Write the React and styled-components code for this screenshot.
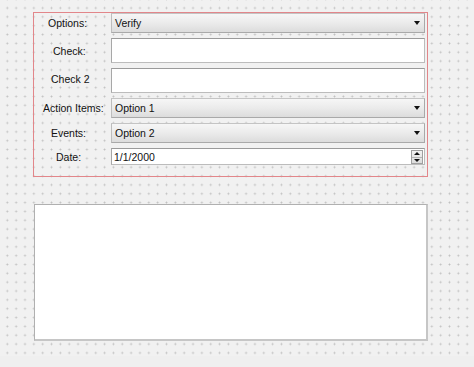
import React from "react";
import styled, { createGlobalStyle } from "styled-components";

const Global = createGlobalStyle`
  html, body { margin: 0; padding: 0; background: #efefef; }
  body { font-family: "Liberation Sans", Arial, sans-serif; }
`;

const Page = styled.div`
  width: 474px;
  height: 367px;
  overflow: hidden;
  background: #efefef;
`;

const Canvas = styled.div`
  height: 356px;
  box-sizing: border-box;
  padding: 12px 0 0 33px;
  background-color: #f1f1f1;
  background-image: radial-gradient(circle, #bfbfbf 0.8px, rgba(0,0,0,0) 1.15px);
  background-size: 8.85px 8.85px;
  background-position: 2.9px 3.6px;
`;

const Frame = styled.div`
  width: 395px;
  height: 165px;
  box-sizing: border-box;
  border: 1px solid #e2868a;
  padding: 0 2px 0 0;
  display: grid;
  grid-template-columns: 77px 1fr;
  row-gap: 5px;
  align-content: start;
`;

const Label = styled.div`
  display: flex;
  align-items: center;
  padding-left: ${(p) => p.$indent}px;
  margin-top: ${(p) => p.$shift || 0}px;
  font-size: 10.5px;
  color: #111;
  white-space: nowrap;
`;

const Combo = styled.div`
  position: relative;
  height: 20px;
  box-sizing: border-box;
  border: 1px solid #a9a9a9;
  border-top-color: #c4c4c4;
  border-left-color: #bdbdbd;
  background: linear-gradient(#f6f6f6, #ebebeb 50%, #dcdcdc);
  display: flex;
  align-items: center;
  padding-left: 3px;
  font-size: 10.5px;
  color: #111;
`;

const Arrow = styled.span`
  position: absolute;
  right: 4px;
  top: 50%;
  margin-top: -2px;
  width: 0;
  height: 0;
  border-left: 3.5px solid transparent;
  border-right: 3.5px solid transparent;
  border-top: 4px solid #111;
`;

const LineEdit = styled.div`
  height: 25px;
  box-sizing: border-box;
  background: #fff;
  border: 1px solid #bcbcbc;
  border-top-color: #9a9a9a;
  border-left-color: #a8a8a8;
`;

const Spin = styled.div`
  position: relative;
  height: 17px;
  box-sizing: border-box;
  background: #fff;
  border: 1px solid #bcbcbc;
  border-top-color: #9a9a9a;
  border-left-color: #a8a8a8;
  display: flex;
  align-items: center;
  padding-left: 2px;
  font-size: 10.5px;
  color: #111;
`;

const SpinButtons = styled.div`
  position: absolute;
  right: 1px;
  top: 1px;
  bottom: 0px;
  width: 12px;
  display: flex;
  flex-direction: column;
  border: 1px solid #a0a0a0;
  box-sizing: border-box;
  background: linear-gradient(#f2f2f2, #dcdcdc);
`;

const SpinHalf = styled.div`
  flex: 1;
  display: flex;
  align-items: center;
  justify-content: center;
  & + & { border-top: 1px solid #b5b5b5; }
`;

const Tri = styled.span`
  width: 0;
  height: 0;
  border-left: 3px solid transparent;
  border-right: 3px solid transparent;
  ${(p) => (p.$up ? "border-bottom: 3px solid #111;" : "border-top: 3px solid #111;")}
`;

const TextBox = styled.div`
  margin-top: 27px;
  margin-left: 1px;
  width: 394px;
  height: 137px;
  box-sizing: border-box;
  background: #fff;
  border: 1px solid #b0b0b0;
  border-bottom: 2px solid #c6c6c6;
  border-right: 2px solid #c6c6c6;
`;

const rows = [
  { label: "Options:", indent: 14, kind: "combo", value: "Verify" },
  { label: "Check:", indent: 19, kind: "edit" },
  { label: "Check 2", indent: 17, kind: "edit", shift: -3 },
  { label: "Action Items:", indent: 9, kind: "combo", value: "Option 1" },
  { label: "Events:", indent: 17, kind: "combo", value: "Option 2" },
  { label: "Date:", indent: 22, kind: "spin", value: "1/1/2000" },
];

export default function App() {
  return (
    <Page>
      <Global />
      <Canvas>
        <Frame>
          {rows.map((r) => (
            <React.Fragment key={r.label}>
              <Label $indent={r.indent} $shift={r.shift}>{r.label}</Label>
              {r.kind === "combo" && (
                <Combo>
                  {r.value}
                  <Arrow />
                </Combo>
              )}
              {r.kind === "edit" && <LineEdit />}
              {r.kind === "spin" && (
                <Spin>
                  {r.value}
                  <SpinButtons>
                    <SpinHalf><Tri $up /></SpinHalf>
                    <SpinHalf><Tri /></SpinHalf>
                  </SpinButtons>
                </Spin>
              )}
            </React.Fragment>
          ))}
        </Frame>
        <TextBox />
      </Canvas>
    </Page>
  );
}
